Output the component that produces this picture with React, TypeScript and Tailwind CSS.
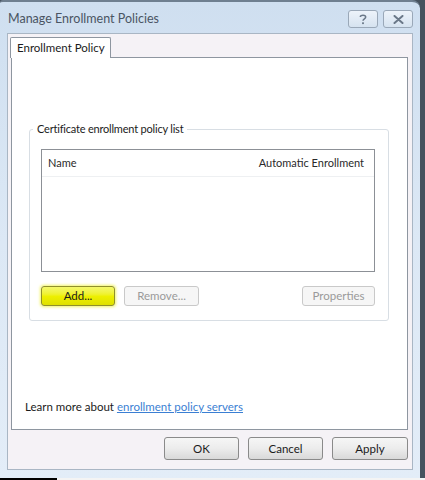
import React from "react";

const FONT = { fontFamily: 'Lato, "Noto Sans", sans-serif' };

const DialogButton = ({
  label,
  disabled = false,
  highlight = false,
  className = "",
}: {
  label: string;
  disabled?: boolean;
  highlight?: boolean;
  className?: string;
}) => {
  let look =
    "border-[#8a8a8a] bg-gradient-to-b from-[#f6f6f6] via-[#ececec] to-[#d9d9d9] text-[#1b1b1b]";
  if (disabled) look = "border-[#c9c9c9] bg-[#f6f6f6] text-[#9a9a9a]";
  if (highlight)
    look =
      "border-[#8f8f2c] bg-gradient-to-b from-[#f4f86a] via-[#eef000] to-[#dfe000] text-[#1b1b1b] shadow-[0_0_3px_1px_#f2f46a]";
  return (
    <div
      className={`flex items-center justify-center rounded-[3px] border text-[11.5px] ${look} ${className}`}
    >
      {label}
    </div>
  );
};

export default function App() {
  return (
    <div className="flex h-[480px] w-[425px] flex-col overflow-hidden bg-[#46525e]" style={FONT}>
      {/* dialog window */}
      <div className="flex h-[478px] w-[420px] flex-col rounded-tr-[8px] rounded-tl-[3px] border-t-2 border-[#6f7f90] bg-gradient-to-b from-[#cfdff0] via-[#dce8f5] to-[#e3edf8]">
        {/* title bar */}
        <div className="flex h-[31px] items-start justify-between pl-[8px] pr-[7px]">
          <span className="mt-[9px] text-[12.5px] leading-[16px] text-[#4a5563]">
            Manage Enrollment Policies
          </span>
          <div className="mt-[8px] flex gap-[5px]">
            <div className="flex h-[18px] w-[30px] items-center justify-center rounded-[3px] border border-[#9aa8b8] bg-gradient-to-b from-[#edf3fa] to-[#d6e3f0]">
              <svg width="8" height="11" viewBox="0 0 8 11">
                <path
                  d="M1.3 3 C1.3 0.6 6.7 0.6 6.7 3 C6.7 4.8 4 4.8 4 6.8"
                  fill="none"
                  stroke="#6a7888"
                  strokeWidth="1.5"
                />
                <rect x="3.1" y="8.3" width="1.8" height="1.8" fill="#6a7888" />
              </svg>
            </div>
            <div className="flex h-[18px] w-[30px] items-center justify-center rounded-[3px] border border-[#9aa8b8] bg-gradient-to-b from-[#edf3fa] to-[#d6e3f0]">
              <svg width="11" height="9" viewBox="0 0 11 9">
                <path d="M1.5 1 L9.5 8 M9.5 1 L1.5 8" stroke="#6a7888" strokeWidth="2" strokeLinecap="round" />
              </svg>
            </div>
          </div>
        </div>

        {/* client area */}
        <div className="mx-[7px] mb-[8px] flex flex-1 flex-col border border-[#a9b6c4] bg-[#f5f2f6] pl-[2px] pr-[4px] pt-[3px]">
          {/* tab strip */}
          <div className="flex">
            <div className="relative z-10 -mb-px flex h-[21px] w-[101px] items-center rounded-t-[2px] border border-b-0 border-[#8e96a0] bg-white pl-[6px] text-[11.5px] text-[#1b1b1b]">
              Enrollment Policy
            </div>
          </div>

          {/* tab panel */}
          <div className="ml-px flex h-[373px] flex-col border border-[#8e96a0] bg-white pl-[17px] pr-[18px]">
            <fieldset className="mt-[63px] flex h-[200px] flex-col rounded-[3px] border border-[#d8dee4] pl-[11px] pr-[13px]">
              <legend className="ml-[-8px] px-[4px] text-[11px] leading-[16px] tracking-[-0.2px] text-[#1b1b1b]">
                Certificate enrollment policy list
              </legend>
              <div className="mt-[12px] flex h-[123px] flex-col border border-[#8c9096] bg-white">
                <div className="flex h-[27px] items-center justify-between border-b border-[#eef0f2] pl-[6px] pr-[10px] text-[11px] text-[#2a2a2a]">
                  <span>Name</span>
                  <span>Automatic Enrollment</span>
                </div>
              </div>
              <div className="mt-[14px] flex h-[20px]">
                <DialogButton label="Add..." highlight className="w-[74px]" />
                <DialogButton label="Remove..." disabled className="ml-[9px] w-[75px]" />
                <DialogButton label="Properties" disabled className="ml-auto w-[73px]" />
              </div>
            </fieldset>

            <div className="ml-[-4px] mt-[78px] text-[11.5px] leading-[16px] text-[#1b1b1b]">
              Learn more about{" "}
              <span className="text-[#3b7fd3] underline">enrollment policy servers</span>
            </div>
          </div>

          {/* dialog buttons */}
          <div className="mt-[7px] flex justify-end gap-[9px]">
            <DialogButton label="OK" className="h-[23px] w-[75px]" />
            <DialogButton label="Cancel" className="h-[23px] w-[75px]" />
            <DialogButton label="Apply" className="h-[23px] w-[76px]" />
          </div>
        </div>
      </div>

      {/* window behind, peeking at the bottom */}
      <div className="flex h-[2px]">
        <div className="w-[57px] bg-black" />
        <div className="flex-1 bg-[#f4f4f4]" />
      </div>
    </div>
  );
}
